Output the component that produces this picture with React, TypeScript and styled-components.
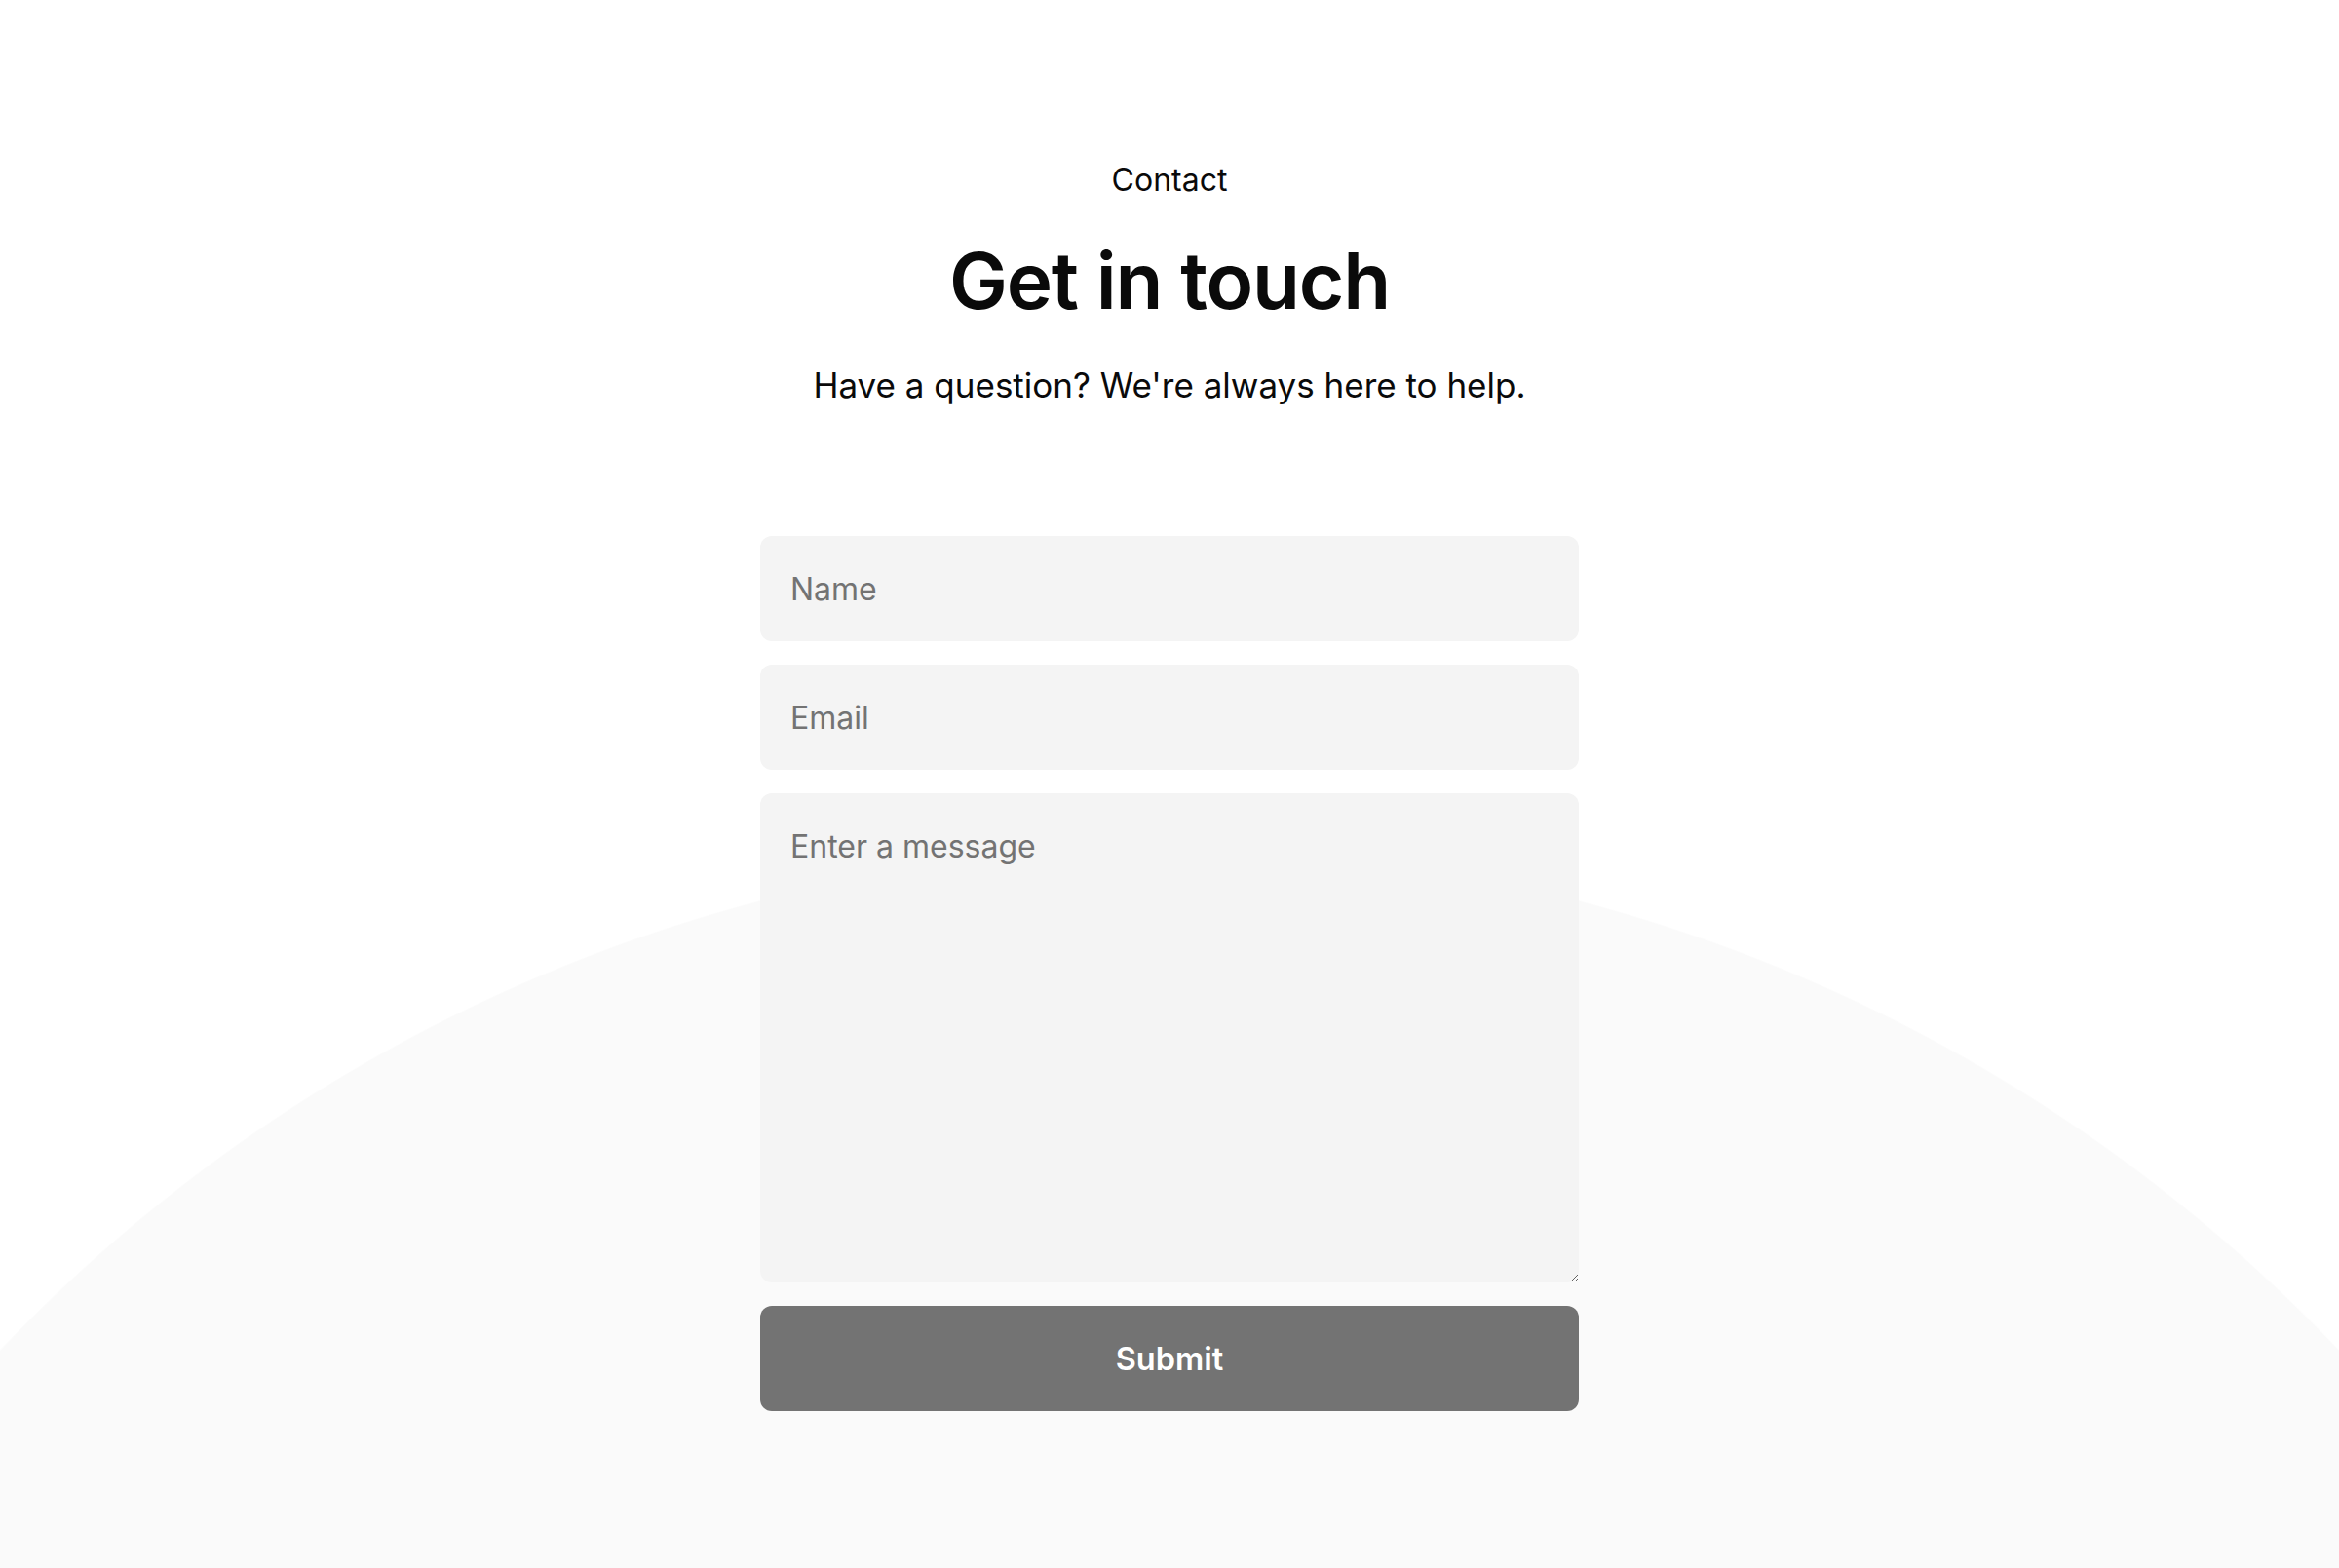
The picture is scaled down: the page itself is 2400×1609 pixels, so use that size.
import React from "react";
import styled, { createGlobalStyle } from "styled-components";

const GlobalStyle = createGlobalStyle`
  html, body {
    margin: 0;
    padding: 0;
    background: #ffffff;
  }
  * {
    box-sizing: border-box;
  }
  body {
    font-family: Inter, "Noto Sans", "Liberation Sans", sans-serif;
    color: #0a0a0a;
  }
`;

const Page = styled.main`
  min-height: 1609px;
  width: 100%;
  display: flex;
  flex-direction: column;
  align-items: center;
  padding-top: 162px;
  background: radial-gradient(
    circle 1655px at 50% 2525px,
    #fafafa 0,
    #fafafa 1654px,
    #ffffff 1655.5px
  );
`;

const Header = styled.header`
  display: flex;
  flex-direction: column;
  align-items: center;
  text-align: center;
`;

const Eyebrow = styled.span`
  font-size: 32px;
  line-height: 45px;
  font-weight: 400;
  color: #0a0a0a;
`;

const Title = styled.h1`
  margin: 33px 0 0;
  font-size: 80px;
  line-height: 96px;
  font-weight: 600;
  letter-spacing: -0.015em;
  color: #0a0a0a;
`;

const Subtitle = styled.p`
  margin: 33px 0 0;
  font-size: 35px;
  line-height: 52px;
  font-weight: 400;
  color: #0a0a0a;
`;

const Form = styled.form`
  margin-top: 129px;
  width: 840px;
  display: flex;
  flex-direction: column;
  gap: 24px;
`;

const fieldBase = `
  width: 100%;
  border: none;
  outline: none;
  border-radius: 12px;
  background: #f4f4f4;
  font-family: Inter, "Noto Sans", "Liberation Sans", sans-serif;
  font-size: 32px;
  line-height: 45px;
  color: #0a0a0a;
  padding: 31.5px 31px;
  margin: 0;
  &::placeholder {
    color: #737373;
    opacity: 1;
  }
`;

const TextField = styled.input`
  ${fieldBase}
  height: 108px;
`;

const MessageField = styled.textarea`
  ${fieldBase}
  height: 502px;
  resize: vertical;
  display: block;
`;

const SubmitButton = styled.button`
  height: 108px;
  width: 100%;
  border: none;
  border-radius: 12px;
  background: #737373;
  color: #ffffff;
  font-family: Inter, "Noto Sans", "Liberation Sans", sans-serif;
  font-size: 32.5px;
  font-weight: 600;
  cursor: pointer;
`;

export default function App() {
  return (
    <>
      <GlobalStyle />
      <Page>
        <Header>
          <Eyebrow>Contact</Eyebrow>
          <Title>Get in touch</Title>
          <Subtitle>Have a question? We're always here to help.</Subtitle>
        </Header>
        <Form onSubmit={(e) => e.preventDefault()}>
          <TextField type="text" placeholder="Name" />
          <TextField type="email" placeholder="Email" />
          <MessageField placeholder="Enter a message" />
          <SubmitButton type="submit">Submit</SubmitButton>
        </Form>
      </Page>
    </>
  );
}
